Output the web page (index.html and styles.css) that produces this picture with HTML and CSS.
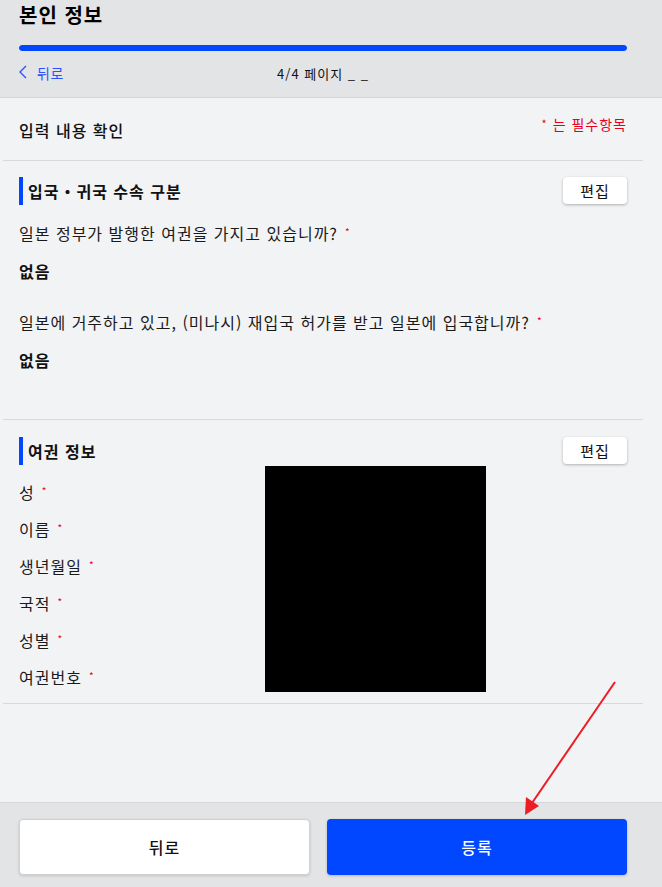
FILE: index.html
```html
<!DOCTYPE html>
<html lang="ko">
<head>
<meta charset="utf-8">
<title>본인 정보</title>
<link rel="stylesheet" href="styles.css">
</head>
<body>
<div class="page">
  <header class="topbar">
    <h1 class="page-title">본인 정보</h1>
    <div class="progress"><div class="progress-fill"></div></div>
    <div class="nav-row">
      <a class="back-link" href="#">
        <svg class="chev" width="8" height="14" viewBox="0 0 8 14"><path d="M7 1 L1 7 L7 13" fill="none" stroke="#2a52ff" stroke-width="1.4"/></svg>
        <span>뒤로</span>
      </a>
      <div class="page-count">4/4 페이지 _ _</div>
      <div></div>
    </div>
  </header>

  <main class="content">
    <div class="intro">
      <h2 class="intro-title">입력 내용 확인</h2>
      <div class="req-note"><span class="req-star">*</span> 는 필수항목</div>
    </div>

    <section class="section">
      <div class="section-head">
        <h3 class="section-title">입국・귀국 수속 구분</h3>
        <button class="edit-btn">편집</button>
      </div>
      <div class="qa">
        <div class="question">일본 정부가 발행한 여권을 가지고 있습니까?<span class="star">*</span></div>
        <div class="answer">없음</div>
      </div>
      <div class="qa last">
        <div class="question">일본에 거주하고 있고, (미나시) 재입국 허가를 받고 일본에 입국합니까?<span class="star">*</span></div>
        <div class="answer">없음</div>
      </div>
    </section>

    <section class="section passport">
      <div class="section-head">
        <h3 class="section-title">여권 정보</h3>
        <button class="edit-btn">편집</button>
      </div>
      <div class="field">성<span class="star">*</span></div>
      <div class="field">이름<span class="star">*</span></div>
      <div class="field">생년월일<span class="star">*</span></div>
      <div class="field">국적<span class="star">*</span></div>
      <div class="field">성별<span class="star">*</span></div>
      <div class="field">여권번호<span class="star">*</span></div>
      <div class="redact"></div>
    </section>
  </main>

  <footer class="footer">
    <button class="btn btn-back">뒤로</button>
    <button class="btn btn-submit">등록</button>
  </footer>

  <svg class="arrow" width="662" height="887" viewBox="0 0 662 887">
    <line x1="615" y1="682" x2="532" y2="803" stroke="#ee1c25" stroke-width="2"/>
    <polygon points="525,815 526,797 539,806" fill="#ee1c25"/>
  </svg>
</div>
</body>
</html>
```

FILE: styles.css
```css
* { box-sizing: border-box; }
html, body { margin: 0; padding: 0; }
body {
  font-family: "Noto Sans CJK KR", "Noto Sans", "Liberation Sans", sans-serif;
  color: #111;
  background: #f2f3f5;
  letter-spacing: 1px;
}
.page {
  position: relative;
  width: 662px;
  height: 887px;
  display: flex;
  flex-direction: column;
  overflow: hidden;
}
.topbar {
  background: #e3e4e6;
  padding: 1px 35px 0 19px;
  height: 98px;
  border-bottom: 1px solid #d5d6d8;
}
.page-title {
  margin: 0;
  font-size: 20px;
  line-height: 28px;
  font-weight: 700;
  color: #000;
}
.progress {
  margin-top: 16px;
  height: 6px;
  border-radius: 3px;
  background: #c9cbd0;
  overflow: hidden;
}
.progress-fill {
  width: 100%;
  height: 100%;
  background: #0047ff;
  border-radius: 3px;
}
.nav-row {
  margin-top: 11px;
  display: grid;
  grid-template-columns: 1fr auto 1fr;
  align-items: center;
  height: 20px;
}
.back-link {
  display: flex;
  align-items: center;
  gap: 10px;
  color: #2a52ff;
  text-decoration: none;
  font-size: 14px;
  line-height: 20px;
  letter-spacing: 0.5px;
}
.chev { display: block; margin-top: -2px; }
.page-count {
  font-size: 13px;
  line-height: 20px;
  color: #111;
  padding-top: 2px;
}
.content {
  flex: 1;
  background: #f2f3f5;
}
.intro {
  display: flex;
  justify-content: space-between;
  align-items: flex-start;
  margin-left: 3px;
  width: 640px;
  padding: 20px 16px 18px;
  border-bottom: 1px solid #d8d9db;
}
.intro-title {
  margin: 0;
  font-size: 16px;
  line-height: 24px;
  font-weight: 500;
}
.req-note {
  margin-top: -3px;
  font-size: 14px;
  line-height: 18px;
  color: #e8001c;
}
.req-star {
  font-size: 11px;
  line-height: 0;
  position: relative;
  top: -2px;
}
.star {
  color: #e8001c;
  font-size: 10px;
  line-height: 0;
  position: relative;
  top: -4px;
  margin-left: 7px;
}
.section {
  margin-left: 3px;
  width: 640px;
  padding: 16px 16px 0;
  border-bottom: 1px solid #d8d9db;
}
.section-head {
  display: flex;
  justify-content: space-between;
  align-items: center;
  height: 28px;
}
.section-title {
  margin: 0;
  font-size: 16px;
  line-height: 28px;
  font-weight: 700;
  border-left: 4px solid #0047ff;
  padding-left: 5px;
}
.edit-btn {
  width: 64px;
  height: 27px;
  border: none;
  border-radius: 4px;
  background: #fff;
  box-shadow: 0 1px 3px rgba(0,0,0,0.28);
  font-family: inherit;
  font-size: 15px;
  letter-spacing: 1px;
  color: #111;
  padding: 0;
  margin-top: -1px;
  line-height: 27px;
}
.qa { margin-top: 17px; }
.qa + .qa { margin-top: 29px; }
.qa.last { padding-bottom: 48px; }
.question {
  font-size: 16px;
  line-height: 22px;
  color: #1a1a1a;
}
.answer {
  margin-top: 16px;
  font-size: 16px;
  line-height: 22px;
  font-weight: 700;
}
.passport {
  position: relative;
  padding-top: 17px;
  padding-bottom: 15px;
}
.field {
  margin-top: 15px;
  font-size: 16px;
  line-height: 22px;
  color: #1a1a1a;
}
.section-head + .field { margin-top: 16px; }
.redact {
  position: absolute;
  left: 262px;
  top: 46px;
  width: 221px;
  height: 226px;
  background: #000;
}
.footer {
  display: flex;
  gap: 17px;
  height: 85px;
  padding: 16px 35px 12px 19px;
  background: #e3e4e6;
  border-top: 1px solid #d6d7d9;
}
.btn {
  height: 56px;
  border-radius: 4px;
  font-family: inherit;
  font-size: 16px;
  letter-spacing: 1px;
  font-weight: 500;
  border: none;
}
.btn-back {
  width: 291px;
  background: #fff;
  color: #111;
  border: 1px solid #d0d1d3;
  box-shadow: 0 1px 3px rgba(0,0,0,0.15);
}
.btn-submit {
  flex: 1;
  background: #0047ff;
  color: #fff;
  box-shadow: 0 1px 3px rgba(0,0,0,0.2);
}
.arrow {
  position: absolute;
  left: 0;
  top: 0;
  pointer-events: none;
}
```
